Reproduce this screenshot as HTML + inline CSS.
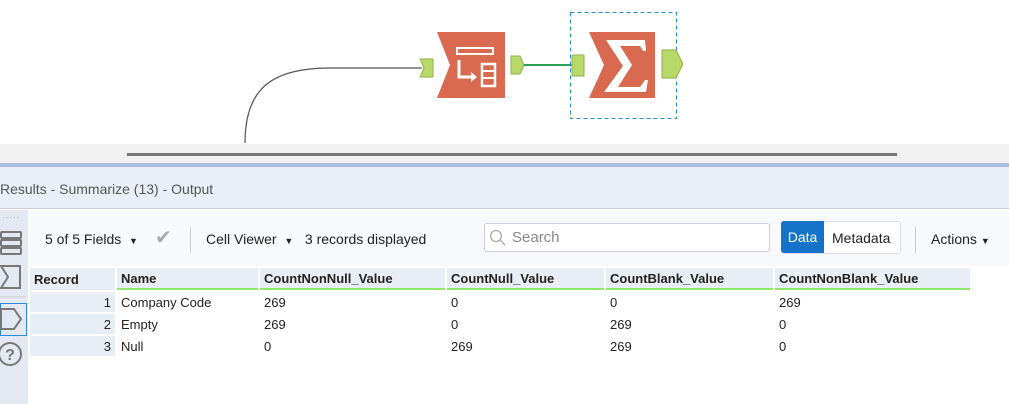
<!DOCTYPE html>
<html><head><style>
body{margin:0;width:1009px;height:404px;overflow:hidden;background:#fff;font-family:"Liberation Sans",sans-serif;position:relative}
.a{position:absolute}
table{border-collapse:separate;border-spacing:2px;font-size:13px;color:#222}
td{height:20px;padding:0 4px;background:#fff;white-space:nowrap}
th{height:20px;padding:0 4px;background:#e9edf5;text-align:left;font-weight:bold;border-bottom:2px solid #8ee86b}
th.r{border-bottom:none}
td.r{background:#e9edf5;text-align:right}
</style></head><body>
<svg class="a" style="left:0;top:0" width="1009" height="145">
<path d="M245 143 C245 90 270 68 330 68 L422 68" fill="none" stroke="#555" stroke-width="1.2"/>
<path d="M420 59 H433 V77 H420 L424 68 Z" fill="#b8d86a" stroke="#8fb24a"/>
<path d="M437 32 H505 V98 H437 L450 65 Z" fill="#d9694f"/>
<rect x="457" y="48" width="36" height="6" fill="none" stroke="#fff" stroke-width="2"/>
<path d="M459 60 V77 H474" fill="none" stroke="#fff" stroke-width="3"/><path d="M471 72 L477 77 L471 82" fill="#fff"/>
<rect x="482" y="64" width="13" height="22" fill="none" stroke="#fff" stroke-width="2.5"/>
<line x1="482" y1="71" x2="495" y2="71" stroke="#fff" stroke-width="2"/><line x1="482" y1="78" x2="495" y2="78" stroke="#fff" stroke-width="2"/>
<path d="M511 56 H520 L524 65 L520 74 H511 Z" fill="#b8d86a" stroke="#8fb24a"/>
<line x1="524" y1="65" x2="575" y2="65" stroke="#2aa05a" stroke-width="2"/>
<rect x="570.5" y="12.5" width="106" height="106" fill="none" stroke="#2a8ae0" stroke-dasharray="4,3"/>
<path d="M572 55 H584 V76 H572 Z" fill="#b8d86a" stroke="#8fb24a"/>
<path d="M589 32 H655 V98 H589 L604 65 Z" fill="#d9694f"/>
<path d="M606 40 H645 L646 51 H643 L640 46 H620 L632 65 L618 87 H640 L645 80 H648 L646 92 H604 L623 66 Z" fill="#fff"/>
<path d="M662 50 H676 L683 64 L676 78 H662 Z" fill="#b8d86a" stroke="#8fb24a"/>
</svg>
<div class="a" style="left:0;top:144px;width:1009px;height:19px;background:#f1f1f1"></div>
<div class="a" style="left:127px;top:153px;width:770px;height:3px;background:#777"></div>
<div class="a" style="left:0;top:163px;width:1009px;height:4px;background:#a9bddb"></div>
<div class="a" style="left:0;top:167px;width:1009px;height:41px;background:#e9eef8;border-bottom:1px solid #ccd;font-size:14px;color:#555;line-height:44px">Results - Summarize (13) - Output</div>
<div class="a" style="left:0;top:210px;width:28px;height:194px;background:#e3e8f1"></div>
<div class="a" style="left:2px;top:213px;font-size:8px;color:#999;letter-spacing:1px">·····</div>
<svg class="a" style="left:0;top:228px" width="28" height="145" fill="none" stroke="#777" stroke-width="2">
<rect x="1" y="4" width="20" height="6" rx="1"/><rect x="1" y="12" width="20" height="6" rx="1"/><rect x="1" y="20" width="20" height="6" rx="1"/>
<path d="M1 38 H20 V60 H1 L8 49 Z"/>
<line x1="0" y1="69" x2="26" y2="69" stroke="#ccc" stroke-width="1"/>
<rect x="0.5" y="75.5" width="26" height="32" stroke="#2a8ae0" stroke-width="1"/>
<path d="M1 81 H14 L21 91 L14 101 H1 Z"/>
<circle cx="10" cy="126" r="11"/><text x="10" y="132" font-size="16" font-weight="bold" fill="#777" stroke="none" text-anchor="middle" font-family="Liberation Sans">?</text>
</svg>
<div class="a" style="left:28px;top:212px;width:981px;height:54px;background:#f8f9fc"></div>
<div class="a" style="left:45px;top:231px;font-size:14px;color:#222">5 of 5 Fields &nbsp;<span style="font-size:9px">▼</span></div>
<div class="a" style="left:155px;top:225px;font-size:20px;color:#aaa">✔</div>
<div class="a" style="left:190px;top:227px;width:1px;height:26px;background:#ccc"></div>
<div class="a" style="left:206px;top:231px;font-size:14px;color:#222">Cell Viewer &nbsp;<span style="font-size:9px">▼</span> &nbsp; 3 records displayed</div>
<div class="a" style="left:484px;top:223px;width:284px;height:27px;background:#fff;border:1px solid #ccd;border-radius:3px"></div>
<svg class="a" style="left:489px;top:229px" width="18" height="18" fill="none" stroke="#aaa" stroke-width="1.3"><circle cx="7" cy="7" r="5.5"/><line x1="11" y1="11" x2="16" y2="16"/></svg>
<div class="a" style="left:512px;top:229px;font-size:15px;color:#888">Search</div>
<div class="a" style="left:781px;top:221px;width:118px;height:31px;border:1px solid #dde;border-radius:3px;background:#fff"></div>
<div class="a" style="left:781px;top:221px;width:43px;height:32px;background:#1472c9;border-radius:3px 0 0 3px;color:#fff;font-size:14px;line-height:32px;text-align:center">Data</div>
<div class="a" style="left:832px;top:230px;font-size:14px;color:#222">Metadata</div>
<div class="a" style="left:915px;top:227px;width:1px;height:26px;background:#ccc"></div>
<div class="a" style="left:931px;top:231px;font-size:14px;color:#222">Actions <span style="font-size:9px">▼</span></div>
<table class="a" style="left:28px;top:266px">
<tr><th class="r" style="width:77px">Record</th><th style="width:133px">Name</th><th style="width:177px">CountNonNull_Value</th><th style="width:149px">CountNull_Value</th><th style="width:159px">CountBlank_Value</th><th style="width:187px">CountNonBlank_Value</th></tr>
<tr><td class="r">1</td><td>Company Code</td><td>269</td><td>0</td><td>0</td><td>269</td></tr>
<tr><td class="r">2</td><td>Empty</td><td>269</td><td>0</td><td>269</td><td>0</td></tr>
<tr><td class="r">3</td><td>Null</td><td>0</td><td>269</td><td>269</td><td>0</td></tr>
</table>
</body></html>
